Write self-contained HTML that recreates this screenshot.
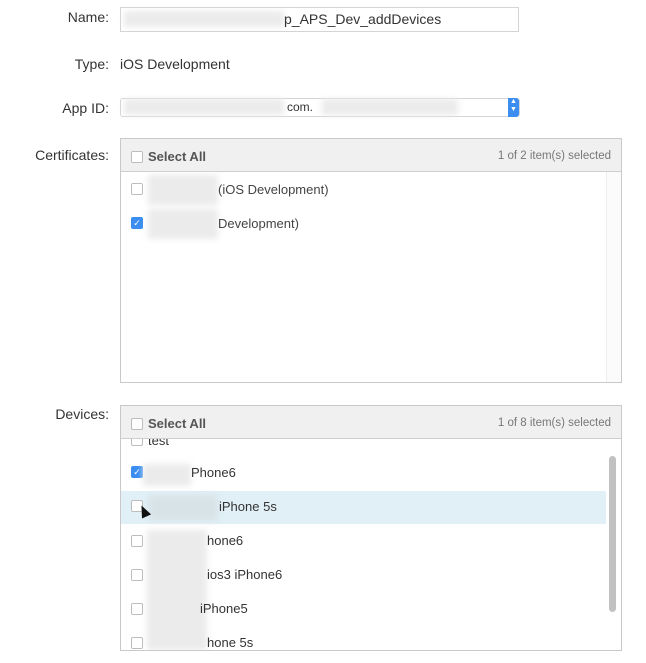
<!DOCTYPE html>
<html><head><style>
body{margin:0;width:646px;height:663px;background:#fff;font-family:"Liberation Sans",sans-serif;font-size:13.5px;color:#333;position:relative;overflow:hidden}
.a{position:absolute}
.lbl{position:absolute;right:537px;text-align:right;color:#333;font-size:14px}
.blur{position:absolute;background:#ebebeb;filter:blur(3px)}
.cb{position:absolute;width:10px;height:10px;border:1px solid #bdbdbd;border-radius:2px;background:#fff}
.cbon{position:absolute;width:12px;height:12px;border-radius:2px;background:#3b8ef0;color:#fff;font-size:9px;line-height:12px;text-align:center}
.box{position:absolute;left:120px;width:500px;border:1px solid #c9c9c9}
.hdr{position:absolute;left:0;top:0;width:500px;height:32px;background:#f0f0f0;border-bottom:1px solid #cfcfcf}
.txt{position:absolute;font-size:13px;color:#333}
</style></head><body>
<div class="lbl" style="top:9px">Name:</div>
<div class="a" style="left:120px;top:7px;width:397px;height:23px;border:1px solid #d4d4d4"></div>
<div class="blur" style="left:124px;top:11px;width:160px;height:16px"></div>
<div class="txt" style="left:284px;top:11px;font-size:14px">p_APS_Dev_addDevices</div>
<div class="lbl" style="top:56px">Type:</div>
<div class="txt" style="left:120px;top:56px;font-size:14px">iOS Development</div>
<div class="lbl" style="top:100px">App ID:</div>
<div class="a" style="left:120px;top:98px;width:398px;height:17px;border:1px solid #d4d4d4;border-radius:3px"></div>
<div class="blur" style="left:124px;top:99px;width:160px;height:16px"></div>
<div class="txt" style="left:287px;top:100px;font-size:12px">com.</div>
<div class="blur" style="left:322px;top:99px;width:136px;height:16px"></div>
<div class="a" style="left:508px;top:98px;width:11px;height:19px;background:#3b8ef0;border-radius:0 3px 3px 0;color:#fff;font-size:7px;line-height:8px;text-align:center">▲<br>▼</div>
<div class="lbl" style="top:147px">Certificates:</div>
<div class="box" style="top:138px;height:243px">
 <div class="hdr"></div>
 <div class="cb" style="left:10px;top:12px"></div>
 <div class="txt" style="left:27px;top:10px;color:#555;font-weight:bold">Select All</div>
 <div class="txt" style="right:10px;top:11px;font-size:11.5px;color:#777">1 of 2 item(s) selected</div>
 <div class="a" style="left:485px;top:33px;width:14px;height:210px;border-left:1px solid #eee;background:#fbfbfb"></div>
 <div class="cb" style="left:10px;top:44px"></div>
 <div class="blur" style="left:27px;top:36px;width:70px;height:30px"></div>
 <div class="txt" style="left:97px;top:43px;color:#444">(iOS Development)</div>
 <div class="cbon" style="left:10px;top:78px">✓</div>
 <div class="blur" style="left:27px;top:70px;width:70px;height:30px"></div>
 <div class="txt" style="left:97px;top:77px;color:#444">Development)</div>
</div>
<div class="lbl" style="top:406px">Devices:</div>
<div class="box" style="top:405px;height:244px;overflow:hidden">
 <div class="a" style="left:0;top:85px;width:485px;height:33px;background:#e1f0f7"></div>
 <div class="cb" style="left:10px;top:28px"></div>
 <div class="txt" style="left:27px;top:27px">test</div>
 <div class="hdr"></div>
 <div class="cb" style="left:10px;top:12px"></div>
 <div class="txt" style="left:27px;top:10px;color:#555;font-weight:bold">Select All</div>
 <div class="txt" style="right:10px;top:11px;font-size:11.5px;color:#777">1 of 8 item(s) selected</div>
 <div class="a" style="left:488px;top:50px;width:7px;height:156px;background:#c1c1c1;border-radius:4px"></div>
 <div class="cbon" style="left:10px;top:60px">✓</div>
 <div class="blur" style="left:22px;top:58px;width:48px;height:22px"></div>
 <div class="txt" style="left:70px;top:59px">Phone6</div>
 <div class="cb" style="left:10px;top:94px"></div>
 <div class="blur" style="left:27px;top:89px;width:70px;height:26px;background:#d8e3e8"></div>
 <div class="txt" style="left:98px;top:93px">iPhone 5s</div>
 <div class="a" style="left:18px;top:99px;width:0;height:0;border-left:5px solid transparent;border-right:5px solid transparent;border-bottom:12px solid #111;transform:rotate(-25deg)"></div>
 <div class="cb" style="left:10px;top:129px"></div>
 <div class="blur" style="left:26px;top:124px;width:60px;height:120px"></div>
 <div class="txt" style="left:86px;top:127px">hone6</div>
 <div class="cb" style="left:10px;top:163px"></div>
 <div class="txt" style="left:86px;top:161px">ios3 iPhone6</div>
 <div class="cb" style="left:10px;top:197px"></div>
 <div class="txt" style="left:79px;top:195px">iPhone5</div>
 <div class="cb" style="left:10px;top:231px"></div>
 <div class="txt" style="left:86px;top:229px">hone 5s</div>
</div>
</body></html>
